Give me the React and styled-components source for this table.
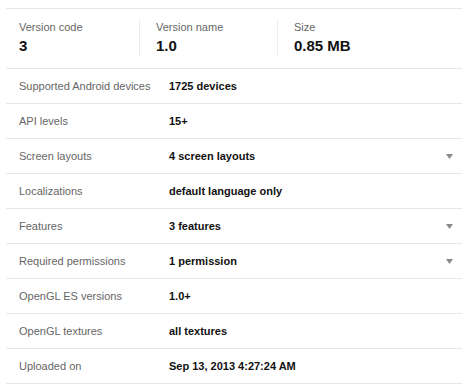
import styled, { createGlobalStyle } from 'styled-components';

const GlobalStyle = createGlobalStyle`
  body {
    margin: 0;
    background: #fff;
    font-family: "Liberation Sans", Arial, Helvetica, sans-serif;
    color: #111;
  }
`;

const Page = styled.div`
  padding: 8px 12px 0 6px;
  width: 456px;
`;

const Panel = styled.div`
  border-top: 1px solid #e6e6e6;
`;

const Summary = styled.div`
  display: grid;
  grid-template-columns: 133px 138px 1fr;
  height: 59px;
  border-bottom: 1px solid #e6e6e6;
`;

const SummaryCell = styled.div`
  margin: 11px 0 13px;
  padding-left: ${(p) => (p.first ? '13px' : '16px')};
  border-left: ${(p) => (p.first ? 'none' : '1px solid #ececec')};
  display: flex;
  flex-direction: column;
  justify-content: center;
  gap: 3px;
`;

const SummaryLabel = styled.div`
  font-size: 11px;
  color: #666;
  line-height: 13px;
`;

const SummaryValue = styled.div`
  font-size: 15px;
  font-weight: bold;
  color: #111;
  line-height: 17px;
`;

const Row = styled.div`
  display: flex;
  align-items: center;
  height: 34px;
  border-bottom: 1px solid #e6e6e6;
  padding: 0 9px 0 13px;
  font-size: 11px;
`;

const Label = styled.div`
  width: 150px;
  color: #666;
`;

const Value = styled.div`
  flex: 1;
  font-weight: bold;
  color: #111;
`;

const Caret = styled.svg`
  width: 7px;
  height: 5px;
  fill: #8a8a8a;
`;

const rows = [
  ['Supported Android devices', '1725 devices'],
  ['API levels', '15+'],
  ['Screen layouts', '4 screen layouts', true],
  ['Localizations', 'default language only'],
  ['Features', '3 features', true],
  ['Required permissions', '1 permission', true],
  ['OpenGL ES versions', '1.0+'],
  ['OpenGL textures', 'all textures'],
  ['Uploaded on', 'Sep 13, 2013 4:27:24 AM'],
];

export default function App() {
  return (
    <Page>
      <GlobalStyle />
      <Panel>
        <Summary>
          <SummaryCell first>
            <SummaryLabel>Version code</SummaryLabel>
            <SummaryValue>3</SummaryValue>
          </SummaryCell>
          <SummaryCell>
            <SummaryLabel>Version name</SummaryLabel>
            <SummaryValue>1.0</SummaryValue>
          </SummaryCell>
          <SummaryCell>
            <SummaryLabel>Size</SummaryLabel>
            <SummaryValue>0.85 MB</SummaryValue>
          </SummaryCell>
        </Summary>
        {rows.map(([label, value, expandable]) => (
          <Row key={label}>
            <Label>{label}</Label>
            <Value>{value}</Value>
            {expandable && (
              <Caret viewBox="0 0 7 5">
                <polygon points="0,0 7,0 3.5,5" />
              </Caret>
            )}
          </Row>
        ))}
      </Panel>
    </Page>
  );
}
